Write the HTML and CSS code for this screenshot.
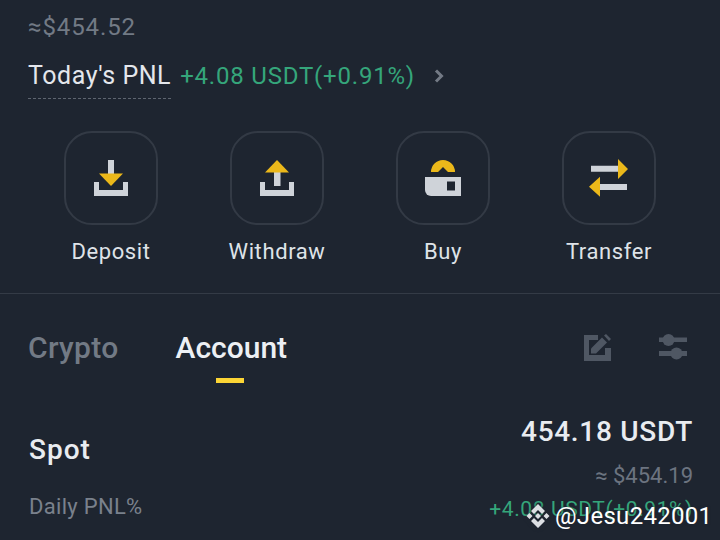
FILE: index.html
```html
<!DOCTYPE html>
<html lang="en">
<head>
    <meta charset="UTF-8">
    <title>Wallet overview</title>
    <link rel="stylesheet" href="styles.css">
</head>
<body>
    <div class="page">
        <div class="summary">
            <div class="approx">≈$454.52</div>
            <div class="pnl-row">
                <span class="pnl-label">Today's PNL</span>
                <span class="pnl-value">+4.08 USDT(+0.91%)</span>
                <svg class="chevron" width="12" height="14" viewBox="0 0 12 14"><path d="M2 1.500 7.500 7 2 12.500" fill="none" stroke="#737a85" stroke-width="3"/></svg>
            </div>
        </div>

        <!-- Action buttons -->
        <div class="actions">
            <div class="action">
                <div class="action-box">
                    <svg width="34" height="36" viewBox="0 0 34 36">
                        <path d="M14 0h6v14h-6zM0 22h5v8h24v-8h5v14H0z" fill="#cfd3d9"/>
                        <path d="M5 13.500h24L17 26z" fill="#ebb81a"/>
                    </svg>
                </div>
                <span class="action-label">Deposit</span>
            </div>
            <div class="action">
                <div class="action-box">
                    <svg width="34" height="36" viewBox="0 0 34 36">
                        <path d="M14 12h6.500v14H14zM0 22h5v8h24v-8h5v14H0z" fill="#cfd3d9"/>
                        <path d="M5 12.500 17 0l12 12.500z" fill="#ebb81a"/>
                    </svg>
                </div>
                <span class="action-label">Withdraw</span>
            </div>
            <div class="action">
                <div class="action-box">
                    <svg width="36" height="36" viewBox="0 0 36 36">
                        <path d="M6 12a12 12 0 0 1 24 0h-7l-5-5-5 5z" fill="#ebb81a"/>
                        <path d="M0 17h36v19H6a6 6 0 0 1-6-6z" fill="#cfd3d9"/>
                        <path d="M22 21.500h8v9h-8z" fill="#1e2530"/>
                    </svg>
                </div>
                <span class="action-label">Buy</span>
            </div>
            <div class="action">
                <div class="action-box">
                    <svg width="40" height="38" viewBox="0 0 40 38">
                        <path d="M2 6.700h27v6H2zM11 25h27v6H11z" fill="#cfd3d9"/>
                        <path d="M29 0l10 10-10 10zM11 17.700v20L0 27.700z" fill="#ebb81a"/>
                    </svg>
                </div>
                <span class="action-label">Transfer</span>
            </div>
        </div>

        <div class="tabs">
            <span class="tab">Crypto</span>
            <span class="tab tab-active">Account</span>
            <div class="tab-tools">
                <svg width="27" height="27" viewBox="0 0 27 27">
                    <path d="M0 1h14v5H5v15h16v-7h6v13H0z" fill="#4f5763"/>
                    <path d="M7 19.500v-5L18 3.500l5 5-11 11z" fill="#4f5763"/>
                    <path d="M20 1.500 22 0l5 5-2 2z" fill="#4f5763"/>
                </svg>
                <svg width="28" height="28" viewBox="0 0 28 28">
                    <path d="M0 4.500h28V9H0zM0 18h28v5H0z" fill="#4f5763"/>
                    <circle cx="9.500" cy="7" r="6" fill="#4f5763"/>
                    <circle cx="17.500" cy="20.500" r="6" fill="#4f5763"/>
                </svg>
            </div>
        </div>

        <div class="balance">
            <div class="balance-left">
                <div class="balance-name">Spot</div>
                <div class="balance-sub">Daily PNL%</div>
            </div>
            <div class="balance-right">
                <div class="balance-amount">454.18 USDT</div>
                <div class="balance-fiat">≈ $454.19</div>
                <div class="balance-pnl">+4.08 USDT(+0.91%)</div>
            </div>
        </div>

        <div class="watermark">
            <svg width="24" height="24" viewBox="0 0 24 24">
                <path d="M12 0l7 7-3 3-4-4-4 4-3-3zM3.500 9l3 3-3 3-3-3zM20.500 9l3 3-3 3-3-3zM12 9l3 3-3 3-3-3zM12 24l-7-7 3-3 4 4 4-4 3 3z" fill="#dcdfe3"/>
            </svg>
            <span>@Jesu242001</span>
        </div>
    </div>
</body>
</html>
```

FILE: styles.css
```css
html, body {
    margin: 0;
    padding: 0;
    background: #1e2530;
}

.page {
    width: 720px;
    height: 540px;
    position: relative;
    overflow: hidden;
    background: #1e2530;
    font-family: "Roboto", "Noto Sans", sans-serif;
}

.summary {
    padding: 12px 28px 0;
}

.approx {
    font-size: 24px;
    line-height: 30px;
    color: #727a85;
    letter-spacing: 0.9px;
}

.pnl-row {
    display: flex;
    align-items: center;
    margin-top: 16px;
    height: 36px;
}

.pnl-label {
    font-size: 25px;
    line-height: 36px;
    color: #e4e7ec;
    border-bottom: 1px dashed #5e6570;
    padding-bottom: 4px;
    margin-top: 4px;
    letter-spacing: 0.55px;
}

.pnl-value {
    font-size: 24px;
    color: #35a67b;
    margin-left: 9px;
    letter-spacing: 0.8px;
}

.chevron {
    margin-left: 19px;
}

.actions {
    display: flex;
    gap: 72px;
    padding: 0 64px;
    margin-top: 37px;
    height: 162px;
    border-bottom: 1px solid #343b46;
}

.action {
    width: 94px;
    display: flex;
    flex-direction: column;
    align-items: center;
}

.action-box {
    box-sizing: border-box;
    width: 94px;
    height: 94px;
    flex: none;
    border: 2px solid #333a45;
    border-radius: 28px;
    display: flex;
    align-items: center;
    justify-content: center;
}

.action-label {
    margin-top: 13px;
    font-size: 22px;
    line-height: 28px;
    color: #dfe3e8;
    white-space: nowrap;
    letter-spacing: 0.6px;
}

.tabs {
    display: flex;
    align-items: center;
    height: 40px;
    padding: 33px 33px 0 28px;
}

.tab {
    font-size: 30px;
    font-weight: 500;
    color: #727a85;
    margin-right: 57px;
    position: relative;
    letter-spacing: 0.3px;
}

.tab-active {
    color: #edf0f4;
    letter-spacing: 0;
}

.tab-active::after {
    content: "";
    position: absolute;
    left: 41px;
    top: 48px;
    width: 28px;
    height: 5px;
    background: #fcd535;
}

.tab-tools {
    margin-left: auto;
    display: flex;
    align-items: center;
    gap: 48px;
}

.balance {
    display: flex;
    justify-content: space-between;
    padding: 47px 27px 0 29px;
}

.balance-name {
    font-size: 28px;
    font-weight: 500;
    line-height: 36px;
    margin-top: 18px;
    color: #e9ecf0;
    letter-spacing: 1px;
}

.balance-sub {
    font-size: 22px;
    line-height: 28px;
    margin-top: 25px;
    color: #7a818c;
    letter-spacing: 0.3px;
}

.balance-right {
    text-align: right;
}

.balance-amount {
    font-size: 28px;
    font-weight: 500;
    line-height: 36px;
    color: #e9ecf0;
    letter-spacing: 0.7px;
}

.balance-fiat {
    font-size: 22px;
    line-height: 28px;
    margin-top: 12px;
    color: #6c7480;
}

.balance-pnl {
    font-size: 21px;
    line-height: 28px;
    margin-top: 5px;
    color: #35a67b;
    letter-spacing: 0.6px;
}

.watermark {
    position: absolute;
    left: 526px;
    top: 502px;
    display: flex;
    align-items: center;
    gap: 5px;
    font-size: 24px;
    line-height: 28px;
    color: #ffffff;
    letter-spacing: 0.3px;
    white-space: nowrap;
    text-shadow: 0 0 3px #1e2530;
}

.watermark svg {
    filter: drop-shadow(0 0 2px #1e2530);
}
```
